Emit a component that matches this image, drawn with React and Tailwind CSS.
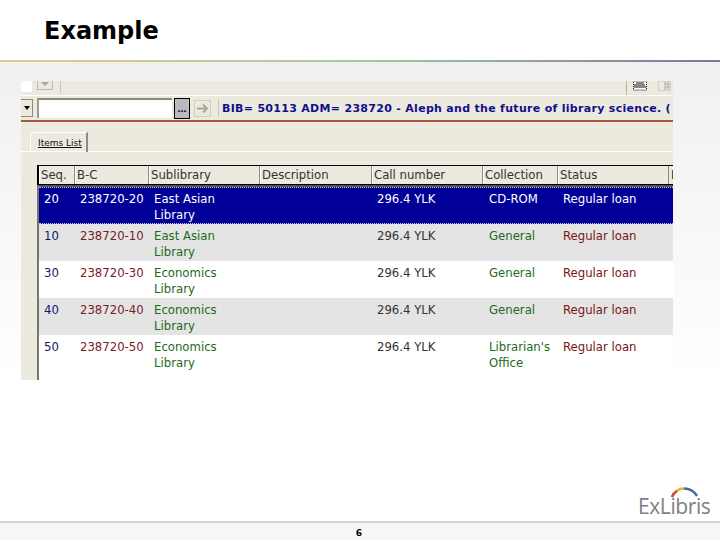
const columns = [
  { label: "Seq.", w: "w-[36px]" },
  { label: "B-C", w: "w-[74px]" },
  { label: "Sublibrary", w: "w-[111px]" },
  { label: "Description", w: "w-[112px]" },
  { label: "Call number", w: "w-[111px]" },
  { label: "Collection", w: "w-[75px]" },
  { label: "Status", w: "w-[111px]" },
];

const items = [
  { seq: "20", bc: "238720-20", sub: ["East Asian", "Library"], coll: ["CD-ROM"], selected: true },
  { seq: "10", bc: "238720-10", sub: ["East Asian", "Library"], coll: ["General"], shaded: true },
  { seq: "30", bc: "238720-30", sub: ["Economics", "Library"], coll: ["General"] },
  { seq: "40", bc: "238720-40", sub: ["Economics", "Library"], coll: ["General"], shaded: true },
  { seq: "50", bc: "238720-50", sub: ["Economics", "Library"], coll: ["Librarian's", "Office"], last: true },
];

const HeaderCell = ({ label, w }) => (
  <div className={`${w} shrink-0 h-full pl-[1px] border-r border-r-[#8d8a80] border-l border-l-white text-[11.7px] leading-[19px] text-[#333]`}>
    {label}
  </div>
);

const Row = ({ item }) => {
  let bg = "bg-white pt-[4px]";
  if (item.selected) bg = "bg-[#000099] pt-[3px] border-y border-dotted border-[#c8c8e0]";
  else if (item.shaded) bg = "bg-[#e4e4e4] pt-[4px]";

  const c = item.selected
    ? { seq: "text-white", bc: "text-white", sub: "text-white", call: "text-white", coll: "text-white", status: "text-white" }
    : { seq: "text-[#16166b]", bc: "text-[#7a1c28]", sub: "text-[#1c6a1c]", call: "text-[#333]", coll: "text-[#1c6a1c]", status: "text-[#7a1414]" };

  return (
    <div className={`${bg} ${item.last ? "flex-1" : "h-[37px]"} flex text-[11.7px] leading-[16px]`}>
      <div className={`w-[36px] shrink-0 pl-[5px] ${c.seq}`}>{item.seq}</div>
      <div className={`w-[74px] shrink-0 pl-[5px] ${c.bc}`}>{item.bc}</div>
      <div className={`w-[111px] shrink-0 pl-[5px] ${c.sub}`}>
        {item.sub.map((s) => <div key={s}>{s}</div>)}
      </div>
      <div className="w-[112px] shrink-0" />
      <div className={`w-[111px] shrink-0 pl-[5px] ${c.call}`}>296.4 YLK</div>
      <div className={`w-[74px] shrink-0 pl-[6px] ${c.coll}`}>
        {item.coll.map((s) => <div key={s}>{s}</div>)}
      </div>
      <div className={`w-[110px] shrink-0 pl-[6px] ${c.status}`}>Regular loan</div>
    </div>
  );
};

const Toolbar = () => (
  <>
    <div className="h-[15px] shrink-0 flex items-start justify-between bg-[#ece9de] border-b border-b-white">
      <div className="flex items-start h-[14px]">
        <div className="w-[11px] h-[11px] bg-white" />
        <div className="ml-[5px] w-[16px] h-[9px] border border-[#bcb9ae] border-t-0 flex justify-center">
          <div className="w-0 h-0 mt-[1px] border-x-[4px] border-x-transparent border-t-[4px] border-t-[#aaa79c]" />
        </div>
        <div className="ml-[7px] w-px h-[12px] bg-[#c9c6ba]" />
      </div>
      <div className="flex items-start h-[14px]">
        <div className="w-px h-[14px] bg-[#b8b5aa] mr-[6px]" />
        <svg width="14" height="10" viewBox="0 0 14 10" className="mr-[11px]">
          <rect x="0.5" y="0" width="13" height="9" fill="#fff" stroke="#111" strokeDasharray="1 1" />
          <path d="M3 2h8M1 4h11M1 6h12" stroke="#111" />
        </svg>
        <svg width="13" height="10" viewBox="0 0 13 10" className="mr-[2px]">
          <rect x="0.5" y="0.5" width="12" height="9" fill="none" stroke="#bbb" strokeDasharray="1 1" />
          <path d="M7 3h5M7 6h5M7 1v8M10 1v8" stroke="#aaa" />
        </svg>
      </div>
    </div>

    <div className="h-[24px] shrink-0 flex items-center bg-[#ece9de] overflow-hidden">
      <div className="w-[12px] h-[18px] shrink-0 bg-[#ece9de] border-y border-r border-y-[#8d8a80] border-r-[#8d8a80] flex items-center justify-center">
        <div className="w-0 h-0 border-x-[3.5px] border-x-transparent border-t-[4px] border-t-black" />
      </div>
      <div className="ml-[4px] w-[135px] h-[20px] shrink-0 bg-white border-t-2 border-l-2 border-t-[#8d8a7c] border-l-[#a09d90]" />
      <div className="ml-[2px] w-[16px] h-[21px] shrink-0 bg-[#bcbac0] border-[1.5px] border-black flex items-center justify-center text-[11px] font-bold leading-none text-black font-['Liberation_Sans',sans-serif]">
        ...
      </div>
      <div className="ml-[4px] w-[17px] h-[17px] shrink-0 border border-[#d0cdc2] flex items-center justify-center">
        <svg width="13" height="11" viewBox="0 0 13 11">
          <path d="M1 5.5h10M7 1.5l4 4-4 4" fill="none" stroke="#a8a59a" strokeWidth="2" />
        </svg>
      </div>
      <div className="ml-[7px] w-px h-[18px] shrink-0 bg-[#c9c6ba]" />
      <div className="ml-[3px] pt-[3px] whitespace-nowrap text-[11px] font-bold tracking-[0.3px] text-[#10108c] font-['DejaVu_Sans',sans-serif]">
        BIB= 50113 ADM= 238720 - Aleph and the future of library science. (
      </div>
    </div>
    <div className="h-[2px] shrink-0 bg-[#a8573a]" />
  </>
);

const Window = () => (
  <div className="w-[652px] h-[299px] overflow-hidden flex flex-col bg-[#ece9de] font-['DejaVu_Sans',sans-serif]">
    <Toolbar />
    <div className="flex-1 flex flex-col pt-[10px] min-h-0">
      <div className="flex h-[20px] shrink-0 border-b border-b-white pl-[9px]">
        <div className="w-[58px] h-[20px] pl-[7px] whitespace-nowrap border-r-2 border-r-[#8d8a80] border-l border-l-white border-t border-t-white rounded-tl text-[9px] leading-[21px] underline text-[#111]">
          Items List
        </div>
      </div>
      <div className="flex-1 flex flex-col pl-[16px] pt-[13px] min-h-0">
        <div className="flex-1 flex flex-col border-l-2 border-l-[#77756c] min-h-0">
          <div className="flex h-[20px] shrink-0 -ml-[2px] border-y border-y-black border-l-2 border-l-black bg-[#ece9de] overflow-hidden">
            {columns.map((col) => <HeaderCell key={col.label} {...col} />)}
            <div className="w-[6px] shrink-0 pl-[2px] text-[12px] leading-[19px] text-[#222]">I</div>
          </div>
          <div className="h-[2px] shrink-0 bg-[#55534c]" />
          {items.map((item) => <Row key={item.seq} item={item} />)}
        </div>
      </div>
    </div>
  </div>
);

const Logo = () => (
  <div className="self-end mr-[10px] relative w-[72px] h-[27px] mb-[5px]">
    <svg width="28" height="12" viewBox="0 0 28 12" className="absolute left-[33px] -top-[2px]">
      <path d="M1 10C4 4 8 1.5 13 1.5" fill="none" stroke="#f0b030" strokeWidth="2.5" />
      <path d="M1 10C2 7 4 5 6 4" fill="none" stroke="#c8503a" strokeWidth="2.5" />
      <path d="M13 1.5C19 1.5 23 4 26 9" fill="none" stroke="#3d6f9e" strokeWidth="2.5" />
    </svg>
    <div className="absolute left-0 bottom-[-3px] whitespace-nowrap text-[21px] leading-[26px] tracking-[-0.4px] text-[#7c8186] font-['Open_Sans',sans-serif]">
      ExLibris
    </div>
  </div>
);

export default function App() {
  return (
    <div className="w-[720px] h-[540px] flex flex-col overflow-hidden bg-white">
      <header className="h-[60px] shrink-0 pl-[44px] pt-[13px] text-[24px] leading-[36px] font-bold text-black font-['DejaVu_Sans',sans-serif]">
        Example
      </header>
      <div className="h-[2px] shrink-0 bg-gradient-to-r from-[#e8c88a] via-[#a8c8a0] to-[#7a7a98]" />
      <main className="flex-1 flex flex-col pl-[21px] pt-[19px] bg-gradient-to-b from-[#f0f0f0] to-white to-70%">
        <Window />
        <div className="flex-1" />
        <Logo />
      </main>
      <footer className="h-[19px] shrink-0 border-t-2 border-t-[#d2d2d2] bg-[#f6f6f6] flex justify-center pt-[4px] pr-[2px] text-[9px] leading-[12px] font-bold text-black font-['DejaVu_Sans',sans-serif]">
        6
      </footer>
    </div>
  );
}
